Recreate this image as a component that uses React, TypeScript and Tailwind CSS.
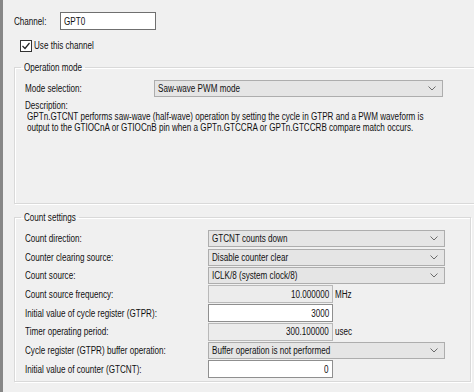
import React from 'react'

// Text in the capture is squeezed horizontally; narrow the glyphs without changing layout.
function T({ children, right }: { children: React.ReactNode; right?: boolean }) {
  return (
    <span
      className={
        'inline-block whitespace-nowrap scale-x-[0.81] ' + (right ? 'origin-right' : 'origin-left')
      }
    >
      {children}
    </span>
  )
}

function Chevron() {
  return (
    <svg width="8" height="5" viewBox="0 0 8 5" className="shrink-0">
      <path d="M0.5 0.5 L4 4 L7.5 0.5" fill="none" stroke="#6b6b6b" strokeWidth="1" />
    </svg>
  )
}

function Select({ value, className }: { value: string; className?: string }) {
  return (
    <div
      className={
        'h-[17px] flex items-center justify-between pl-[3px] pr-[6px] bg-[#e5e5e5] border border-[#adadad] ' +
        (className ?? '')
      }
    >
      <T>{value}</T>
      <Chevron />
    </div>
  )
}

function NumField({ value, readOnly, unit }: { value: string; readOnly?: boolean; unit?: string }) {
  return (
    <div className="flex items-center">
      <div
        className={
          readOnly
            ? 'w-[125px] h-[18px] flex items-center justify-end pr-[3px] bg-[#ececec] border border-[#b9b9b9]'
            : 'w-[125px] h-[18px] flex items-center justify-end pr-[3px] bg-white border border-[#8f8f8f]'
        }
      >
        <T right>{value}</T>
      </div>
      {unit && (
        <span className="ml-[2px]">
          <T>{unit}</T>
        </span>
      )}
    </div>
  )
}

const countRows: { label: string; control: React.ReactNode }[] = [
  { label: 'Count direction:', control: <Select value="GTCNT counts down" className="w-[237px]" /> },
  { label: 'Counter clearing source:', control: <Select value="Disable counter clear" className="w-[237px]" /> },
  { label: 'Count source:', control: <Select value="ICLK/8 (system clock/8)" className="w-[237px]" /> },
  { label: 'Count source frequency:', control: <NumField value="10.000000" readOnly unit="MHz" /> },
  { label: 'Initial value of cycle register (GTPR):', control: <NumField value="3000" /> },
  { label: 'Timer operating period:', control: <NumField value="300.100000" readOnly unit="usec" /> },
  {
    label: 'Cycle register (GTPR) buffer operation:',
    control: <Select value="Buffer operation is not performed" className="w-[237px]" />,
  },
  { label: 'Initial value of counter (GTCNT):', control: <NumField value="0" /> },
]

export default function App() {
  return (
    <div className="w-[474px] h-[392px] overflow-hidden bg-[#f0f0f0] border-l-[3px] border-[#878787] text-[10px] leading-[11px] text-[#111] font-['Liberation_Sans',Arial,sans-serif]">
      <div className="pl-[11px] pt-[12px] pr-[2px]">
        <div className="flex items-center h-[18px]">
          <span className="w-[46px]">
            <T>Channel:</T>
          </span>
          <div className="w-[96px] h-[18px] flex items-center px-[3px] bg-white border border-[#6f6f6f]">
            <T>GPT0</T>
          </div>
        </div>

        <label className="flex items-center gap-[2px] mt-[9px] ml-[6px] h-[13px]">
          <span className="w-[12px] h-[12px] border border-[#333] bg-white flex items-center justify-center">
            <svg width="10" height="10" viewBox="0 0 10 10">
              <path d="M1.5 5 L4 7.5 L8.5 2" fill="none" stroke="#222" strokeWidth="1.2" />
            </svg>
          </span>
          <T>Use this channel</T>
        </label>

        <fieldset className="mt-[10px] w-[457px] h-[142px] border border-[#d9d9d9] shadow-[inset_1px_1px_0_#ffffff,1px_1px_0_#ffffff] px-[10px]">
          <legend className="ml-[-4px] px-[3px] w-[64px]">
            <T>Operation mode</T>
          </legend>
          <div className="flex items-center h-[17px] mt-[7px]">
            <span className="w-[129px]">
              <T>Mode selection:</T>
            </span>
            <Select value="Saw-wave PWM mode" className="w-[289px]" />
          </div>
          <div className="mt-[3px]">
            <T>Description:</T>
          </div>
          <div className="ml-[2px] flex flex-col">
            <T>GPTn.GTCNT performs saw-wave (half-wave) operation by setting the cycle in GTPR and a PWM waveform is</T>
            <T>output to the GTIOCnA or GTIOCnB pin when a GPTn.GTCCRA or GPTn.GTCCRB compare match occurs.</T>
          </div>
        </fieldset>

        <fieldset className="mt-[8px] w-[457px] h-[170px] border border-[#d9d9d9] shadow-[inset_1px_1px_0_#ffffff,1px_1px_0_#ffffff] px-[10px]">
          <legend className="ml-[-4px] px-[3px] w-[58px]">
            <T>Count settings</T>
          </legend>
          <div className="mt-[6px] flex flex-col">
            {countRows.map((r) => (
              <div key={r.label} className="flex items-center h-[18.7px]">
                <span className="w-[183px]">
                  <T>{r.label}</T>
                </span>
                {r.control}
              </div>
            ))}
          </div>
        </fieldset>
      </div>
    </div>
  )
}
